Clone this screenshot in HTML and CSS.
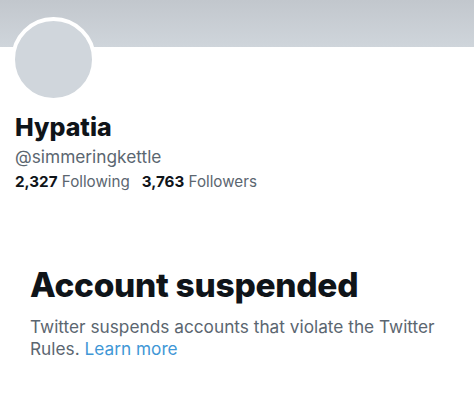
FILE: index.html
```html
<!DOCTYPE html>
<html>
<head>
<meta charset="utf-8">
<link rel="stylesheet" href="styles.css">
</head>
<body>
<div class="page">
  <div class="banner"></div>
  <div class="profile">
    <div class="avatar"></div>
    <div class="name">Hypatia</div>
    <div class="handle">@simmeringkettle</div>
    <div class="stats">
      <span class="stat"><b>2,327</b> Following</span>
      <span class="stat"><b>3,763</b> Followers</span>
    </div>
  </div>
  <div class="suspended">
    <h1 class="title">Account suspended</h1>
    <p class="desc">Twitter suspends accounts that violate the Twitter Rules. <a class="link" href="#">Learn more</a></p>
  </div>
</div>
</body>
</html>
```
FILE: styles.css
```css
html, body {
  margin: 0;
  padding: 0;
  background: #ffffff;
}
body {
  font-family: Inter, "Liberation Sans", sans-serif;
  color: #0f1419;
}
.page {
  width: 474px;
  height: 409px;
  overflow: hidden;
}
.banner {
  height: 47px;
  background: linear-gradient(#c2c7cd, #cfd5db);
}
.profile {
  padding: 0 15px;
}
.avatar {
  width: 77px;
  height: 77px;
  border-radius: 50%;
  background: #d0d6dc;
  border: 4px solid #ffffff;
  margin: -30px 0 0 -4px;
}
.name {
  font-size: 25px;
  font-weight: 800;
  line-height: 30px;
  margin-top: 10px;
}
.handle {
  font-size: 17.3px;
  color: #5b6670;
  line-height: 24px;
  margin-top: 3px;
}
.stats {
  display: flex;
  gap: 12px;
  font-size: 15.2px;
  color: #5b6670;
  line-height: 22px;
  margin-top: 2px;
}
.stats b {
  color: #0f1419;
  font-weight: 700;
}
.suspended {
  padding: 0 30px;
  margin-top: 72px;
}
.title {
  margin: 0;
  font-size: 33.5px;
  font-weight: 800;
  line-height: 40px;
  letter-spacing: -0.3px;
}
.desc {
  margin: 11px 0 0;
  font-size: 17.25px;
  line-height: 22px;
  color: #5b6670;
}
.link {
  color: #3f97d6;
  text-decoration: none;
}
```
